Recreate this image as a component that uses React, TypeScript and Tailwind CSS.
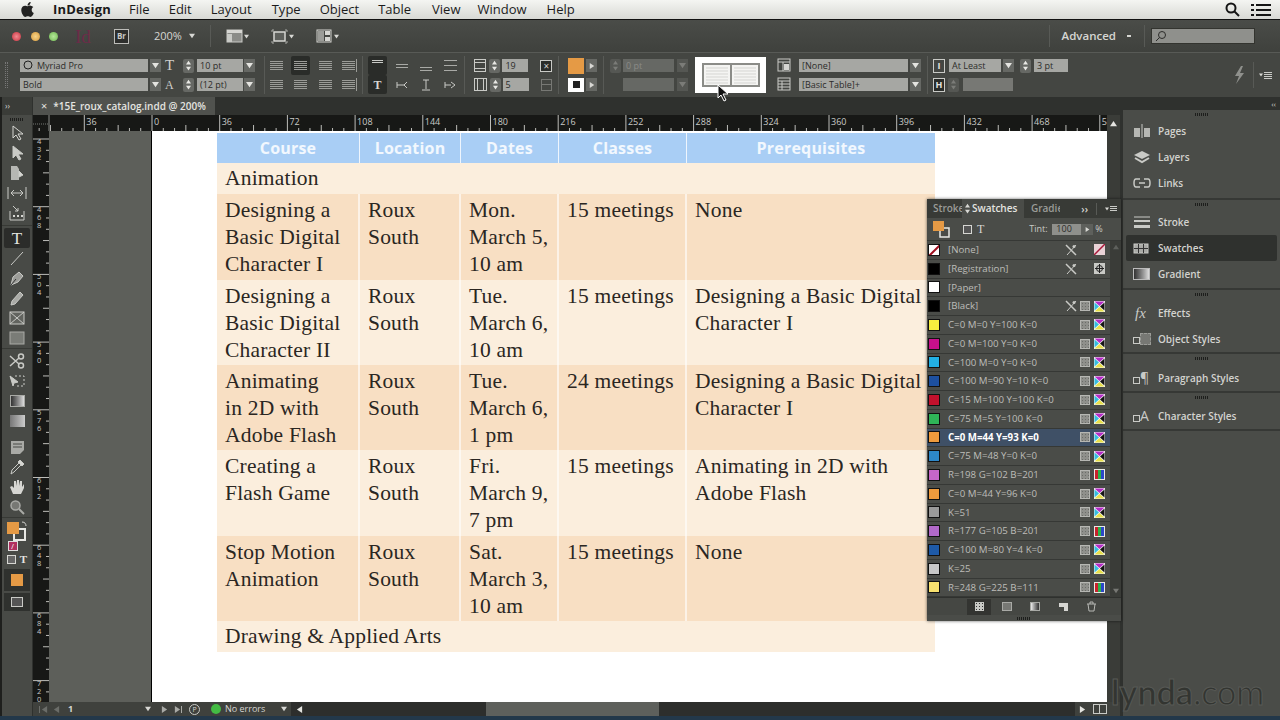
import { FaApple } from "react-icons/fa";
import type { ReactNode } from "react";

// ── Small shared bits ──
const Arrow = ({ dir = "down", c = "#d8d8d4", s = 7 }: { dir?: "down" | "up" | "left" | "right"; c?: string; s?: number }) => {
  const pts = { down: "0,1 8,1 4,7", up: "0,7 8,7 4,1", left: "7,0 7,8 1,4", right: "1,0 1,8 7,4" }[dir];
  return (
    <svg width={s} height={s} viewBox="0 0 8 8" className="shrink-0">
      <polygon points={pts} fill={c} />
    </svg>
  );
};

const Ic = ({ w = 16, h = 16, children, vb }: { w?: number; h?: number; children: ReactNode; vb?: string }) => (
  <svg width={w} height={h} viewBox={vb ?? `0 0 ${w} ${h}`} fill="none" stroke="#c9cac6" strokeWidth="1" className="shrink-0">
    {children}
  </svg>
);

const Field = ({ w, children, dim }: { w: number; children?: ReactNode; dim?: boolean }) => (
  <div
    className={`flex h-[13px] shrink-0 items-center overflow-hidden px-[3px] text-[9px] whitespace-nowrap ${dim ? "bg-[#666864] text-[#8a8b87]" : "bg-[#a6a7a3] text-[#2c2c2a]"}`}
    style={{ width: w }}
  >
    {children}
  </div>
);

const DropBtn = ({ dim, ml = 2 }: { dim?: boolean; ml?: number }) => (
  <div className={`flex h-[13px] w-[11px] shrink-0 items-center justify-center ${dim ? "bg-[#555753]" : "bg-[#666864]"}`} style={{ marginLeft: ml }}>
    <Arrow c={dim ? "#7b7c78" : "#e4e4e0"} s={7} />
  </div>
);

const Stepper = ({ dim }: { dim?: boolean }) => (
  <div className={`flex h-[14px] w-[11px] shrink-0 flex-col items-center justify-center gap-[1px] rounded-[2px] ${dim ? "bg-[#555753]" : "bg-[#666864]"}`}>
    <Arrow dir="up" s={5} c={dim ? "#7b7c78" : "#e8e8e4"} />
    <Arrow s={5} c={dim ? "#7b7c78" : "#e8e8e4"} />
  </div>
);

const Row = ({ children, className = "" }: { children: ReactNode; className?: string }) => (
  <div className={`flex h-[19px] items-center ${className}`}>{children}</div>
);

const Sep = ({ ml = 0 }: { ml?: number }) => <div className="h-[38px] w-px shrink-0 bg-[#585a56]" style={{ marginLeft: ml }} />;

const Grip = ({ w = 16 }: { w?: number }) => (
  <div className="flex h-[3px] gap-px" style={{ width: w }}>
    {Array.from({ length: Math.floor(w / 2) }).map((_, i) => (
      <div key={i} className="h-[3px] w-px bg-[#1d1e1c]" />
    ))}
  </div>
);

// ── Mac menu bar ──
const menus = ["File", "Edit", "Layout", "Type", "Object", "Table", "View", "Window", "Help"];
const menuGaps = [18, 19, 19, 20, 19, 19, 21, 17, 20];

function MenuBar() {
  return (
    <div className="flex h-[20px] items-center border-b border-[#111] bg-gradient-to-b from-[#f4f5f2] to-[#d8d9d5] pl-[19px] font-['Open_Sans',sans-serif] text-[13px] text-[#1b1b1b]">
      <FaApple className="text-[17px] text-[#222]" />
      <span className="ml-[17px] font-bold tracking-[0.2px]">InDesign</span>
      {menus.map((m, i) => (
        <span key={m} style={{ marginLeft: menuGaps[i] }}>
          {m}
        </span>
      ))}
      <div className="ml-auto mr-[9px] flex items-center gap-[11px]">
        <svg width="15" height="15" viewBox="0 0 15 15" fill="none" stroke="#151515" strokeWidth="2">
          <circle cx="6" cy="6" r="4.5" />
          <path d="M9.5 9.5 14 14" />
        </svg>
        <svg width="20" height="14" viewBox="0 0 20 14" fill="#151515">
          <rect x="0" y="1" width="3" height="2" />
          <rect x="5" y="1" width="15" height="2" />
          <rect x="0" y="6" width="3" height="2" />
          <rect x="5" y="6" width="15" height="2" />
          <rect x="0" y="11" width="3" height="2" />
          <rect x="5" y="11" width="15" height="2" />
        </svg>
      </div>
    </div>
  );
}

// ── Application bar ──
function AppBar() {
  return (
    <div className="flex h-[32px] items-center bg-gradient-to-b from-[#4a4c48] to-[#3f413d] font-['Open_Sans',sans-serif]">
      <div className="ml-[12px] h-[9px] w-[9px] rounded-full bg-[radial-gradient(#f08a90,#c9303e)]" />
      <div className="ml-[10px] h-[9px] w-[9px] rounded-full bg-[radial-gradient(#f6d48a,#d89a3a)]" />
      <div className="ml-[9px] h-[9px] w-[9px] rounded-full bg-[radial-gradient(#b6e89a,#6eb850)]" />
      <span className="ml-[17px] w-[20px] font-['Liberation_Serif',serif] text-[19px] leading-none text-[#6c2c48]">Id</span>
      <div className="ml-[19px] flex h-[15px] w-[15px] items-center justify-center border border-[#bdbdb9] bg-[#2e2f2d] text-[8px] font-bold text-[#c9cac6]">Br</div>
      <span className="ml-[25px] w-[29px] whitespace-nowrap text-[11px] text-[#d6d6d2]">200%</span>
      <span className="ml-[6px]"><Arrow s={6} /></span>
      <div className="ml-[15px] h-[22px] w-px bg-[#585a56]" />
      <div className="ml-[15px] flex items-center gap-[1px]">
        <Ic w={17} h={14}>
          <rect x="1" y="1" width="15" height="12" fill="#8b8c88" stroke="#c9cac6" />
          <rect x="1" y="1" width="15" height="3" fill="#d6d6d2" stroke="none" />
          <rect x="1" y="5" width="5" height="8" fill="#c9cac6" stroke="none" />
        </Ic>
        <Arrow s={5} />
      </div>
      <div className="ml-[22px] flex items-center gap-[1px]">
        <Ic w={17} h={15}>
          <rect x="3" y="3" width="11" height="9" fill="#5e605c" stroke="#d6d6d2" strokeWidth="1.5" />
          <path d="M1 3V1H3M14 1H16V3M16 12V14H14M3 14H1V12" stroke="#a9aaa6" />
        </Ic>
        <Arrow s={5} />
      </div>
      <div className="ml-[22px] flex items-center gap-[1px]">
        <Ic w={17} h={14}>
          <rect x="1" y="1" width="14" height="12" stroke="#d6d6d2" />
          <rect x="2" y="2" width="6" height="10" fill="#9b9c98" stroke="none" />
          <rect x="9" y="2" width="5" height="4" fill="#d6d6d2" stroke="none" />
          <rect x="9" y="8" width="5" height="4" fill="#d6d6d2" stroke="none" />
        </Ic>
        <Arrow s={5} />
      </div>
      <div className="ml-auto h-[22px] w-px bg-[#585a56]" />
      <span className="ml-[12px] text-[11.5px] font-semibold text-[#d6d6d2]">Advanced</span>
      <div className="ml-[11px] h-[2px] w-[4px] bg-[#d6d6d2]" />
      <div className="ml-[13px] h-[22px] w-px bg-[#585a56]" />
      <div className="ml-[6px] mr-[25px] flex h-[16px] w-[104px] items-center border border-[#33342f] bg-[#8f908c] pl-[3px]">
        <svg width="12" height="12" viewBox="0 0 12 12" fill="none" stroke="#2c2c2a">
          <circle cx="7" cy="5" r="3.5" />
          <path d="M4.5 7.5 1 11" />
        </svg>
      </div>
    </div>
  );
}

// ── Control panel ──
const AlignIcon = ({ active, lastBar }: { active?: boolean; lastBar?: boolean }) => (
  <div className={`flex h-[19px] w-[19px] items-center justify-center gap-[1px] ${active ? "rounded-[2px] bg-[#2a2c29]" : ""}`}>
    <div className="flex w-[13px] flex-col gap-[1px]">
      {[0, 1, 2, 3, 4].map((i) => (
        <div key={i} className="h-px bg-[#9b9c98]" />
      ))}
    </div>
    {lastBar && <div className="h-[13px] w-px bg-[#9b9c98]" />}
  </div>
);

const Slot = ({ children, active }: { children: ReactNode; active?: boolean }) => (
  <div className={`flex h-[19px] w-[19px] items-center justify-center ${active ? "rounded-[2px] bg-[#2a2c29]" : ""}`}>{children}</div>
);

function ControlPanel() {
  return (
    <div className="flex h-[45px] items-center border-t border-[#585a56] bg-[#444642] font-['Open_Sans',sans-serif]">
      <div className="ml-[5px] h-[26px] w-[3px] border-x border-dotted border-[#777]" />
      {/* font family and style */}
      <div className="ml-[12px] flex w-[141px] flex-col">
        <Row>
          <Field w={128}>
            <svg width="11" height="11" viewBox="0 0 11 11" fill="none" stroke="#222" className="mr-[3px]">
              <circle cx="5" cy="5" r="4" />
            </svg>
            Myriad Pro
          </Field>
          <DropBtn />
        </Row>
        <Row>
          <Field w={128}>Bold</Field>
          <DropBtn />
        </Row>
      </div>
      <div className="ml-[4px] flex w-[90px] flex-col">
        <Row>
          <span className="w-[18px] font-['Liberation_Serif',serif] text-[15px] leading-none text-[#d0d0cc]">T</span>
          <Stepper />
          <div className="ml-[3px]" />
          <Field w={46}>10 pt</Field>
          <DropBtn ml={1} />
        </Row>
        <Row>
          <span className="w-[18px] font-['Liberation_Serif',serif] text-[12px] leading-none text-[#d0d0cc]">A</span>
          <Stepper />
          <div className="ml-[3px]" />
          <Field w={46}>(12 pt)</Field>
          <DropBtn ml={1} />
        </Row>
      </div>
      <Sep ml={9} />
      {/* paragraph alignment */}
      <div className="ml-[2px] flex w-[92px] flex-col">
        <Row className="justify-between">
          <AlignIcon />
          <AlignIcon active />
          <AlignIcon />
          <AlignIcon lastBar />
        </Row>
        <Row className="justify-between">
          <AlignIcon />
          <AlignIcon />
          <AlignIcon />
          <AlignIcon lastBar />
        </Row>
      </div>
      <Sep ml={3} />
      {/* vertical text alignment */}
      <div className="ml-[5px] flex w-[92px] flex-col">
        <Row className="justify-between">
          <Slot active><div className="mb-[9px] h-[3px] w-[11px] border-y border-[#c9cac6]" /></Slot>
          <Slot><div className="h-[4px] w-[12px] border-y border-[#a9aaa6]" /></Slot>
          <Slot><div className="mt-[6px] h-[4px] w-[12px] border-y border-[#a9aaa6]" /></Slot>
          <Slot>
            <div className="flex h-[11px] w-[13px] flex-col justify-between">
              <div className="h-px bg-[#a9aaa6]" />
              <div className="h-px bg-[#a9aaa6]" />
              <div className="h-px bg-[#a9aaa6]" />
            </div>
          </Slot>
        </Row>
        <Row className="justify-between">
          <Slot active><span className="font-['Liberation_Serif',serif] text-[12px] font-bold leading-none text-[#d6d6d2]">T</span></Slot>
          <Slot><Ic w={12} h={10}><path d="M1 2V8M1 5H8M11 2 8 5 11 8" /></Ic></Slot>
          <Slot><Ic w={10} h={12}><path d="M2 1H8M5 1V10M1 11H9" /></Ic></Slot>
          <Slot><Ic w={12} h={10}><path d="M1 2V8M1 5H7M7 2 11 5 7 8" /></Ic></Slot>
        </Row>
      </div>
      <Sep ml={4} />
      {/* rows and columns */}
      <div className="ml-[9px] flex w-[78px] flex-col">
        <Row>
          <div className="flex h-[13px] w-[13px] flex-col justify-between border border-[#c9cac6] py-[2px]">
            <div className="h-px bg-[#c9cac6]" />
            <div className="h-px bg-[#c9cac6]" />
          </div>
          <div className="ml-[3px]"><Stepper /></div>
          <div className="ml-[2px]"><Field w={26}>19</Field></div>
          <div className="ml-[12px] flex h-[12px] w-[12px] items-center justify-center border border-[#c9cac6] bg-[#2a2c29] text-[10px] leading-none text-[#d6d6d2]">×</div>
        </Row>
        <Row>
          <div className="flex h-[13px] w-[13px] justify-between border border-[#c9cac6] px-[2px]">
            <div className="w-px bg-[#c9cac6]" />
            <div className="w-px bg-[#c9cac6]" />
          </div>
          <div className="ml-[3px]"><Stepper /></div>
          <div className="ml-[2px]"><Field w={26}>5</Field></div>
          <div className="ml-[12px] flex h-[12px] w-[12px] items-center border border-[#777874]"><div className="h-px w-full bg-[#777874]" /></div>
        </Row>
      </div>
      <Sep ml={6} />
      {/* cell fill */}
      <div className="ml-[9px] flex w-[29px] flex-col">
        <Row>
          <div className="h-[16px] w-[16px] bg-[#e59a45]" />
          <div className="ml-[2px] flex h-[13px] w-[11px] items-center justify-center bg-[#666864]"><Arrow dir="right" s={6} /></div>
        </Row>
        <Row>
          <div className="flex h-[14px] w-[16px] items-center justify-center bg-white"><div className="h-[7px] w-[7px] bg-[#222]" /></div>
          <div className="ml-[2px] flex h-[13px] w-[11px] items-center justify-center bg-[#666864]"><Arrow dir="right" s={6} /></div>
        </Row>
      </div>
      <Sep ml={6} />
      <div className="ml-[6px] flex w-[78px] flex-col">
        <Row>
          <Stepper dim />
          <div className="ml-[2px]"><Field w={51} dim>0 pt</Field></div>
          <DropBtn dim ml={3} />
        </Row>
        <Row>
          <div className="w-[13px]" />
          <Field w={51} dim />
          <DropBtn dim ml={3} />
        </Row>
      </div>
      {/* cell preview */}
      <div className="ml-[7px] flex h-[36px] w-[71px] items-center justify-center bg-white">
        <svg width="58" height="24" viewBox="0 0 58 24" fill="none">
          <rect x="1" y="1" width="56" height="22" fill="#f4f4f2" stroke="#8b8c88" strokeWidth="2" />
          <path d="M29 1V23" stroke="#8b8c88" strokeWidth="2" />
          <path d="M4 5H26M4 8H26M4 11H26M4 14H26M4 17H26M4 20H26M32 5H54M32 8H54M32 11H54M32 14H54M32 17H54M32 20H54" stroke="#d5d5d2" />
        </svg>
      </div>
      <div className="ml-[11px] flex w-[144px] flex-col">
        <Row>
          <Ic w={17} h={15}>
            <rect x="1" y="1" width="12" height="12" stroke="#c9cac6" />
            <path d="M1 4H13M6 4V13" />
            <rect x="7" y="6" width="5" height="6" fill="#d6d6d2" stroke="none" />
          </Ic>
          <div className="ml-[5px]"><Field w={109}>[None]</Field></div>
          <DropBtn />
        </Row>
        <Row>
          <Ic w={17} h={15}>
            <rect x="1" y="1" width="12" height="12" stroke="#c9cac6" />
            <path d="M1 4H13M1 7H13M1 10H13M5 4V13" />
          </Ic>
          <div className="ml-[5px]"><Field w={109}>[Basic Table]+</Field></div>
          <DropBtn />
        </Row>
      </div>
      <Sep ml={6} />
      <div className="ml-[5px] flex w-[140px] flex-col">
        <Row>
          <div className="flex h-[14px] w-[12px] items-center justify-center border border-[#c9cac6] text-[9px] font-bold text-[#e4e4e0]">I</div>
          <div className="ml-[4px]"><Field w={52}>At Least</Field></div>
          <DropBtn />
          <div className="ml-[6px]"><Stepper /></div>
          <div className="ml-[3px]"><Field w={34}>3 pt</Field></div>
        </Row>
        <Row>
          <div className="flex h-[14px] w-[12px] items-center justify-center border border-[#c9cac6] bg-[#2a2c29] text-[9px] font-bold text-[#e4e4e0]">H</div>
          <div className="ml-[3px]"><Stepper dim /></div>
          <div className="ml-[4px] h-[13px] w-[50px] bg-[#777874]" />
        </Row>
      </div>
      <svg width="12" height="18" viewBox="0 0 12 18" fill="#8f908c" className="ml-[160px]">
        <path d="M8 0 2 10H6L3 18 11 7H7L10 0Z" />
      </svg>
      <div className="ml-[8px] h-[26px] w-px bg-[#585a56]" />
      <div className="ml-[5px] flex items-center gap-[1px]">
        <Arrow s={4} />
        <div className="flex w-[8px] flex-col gap-[1px]">
          <div className="h-px bg-[#c9cac6]" />
          <div className="h-px bg-[#c9cac6]" />
          <div className="h-px bg-[#c9cac6]" />
          <div className="h-px bg-[#c9cac6]" />
        </div>
      </div>
    </div>
  );
}

// ── Tools ──
const ToolSlot = ({ children, active }: { children: ReactNode; active?: boolean }) => (
  <div className={`mx-auto flex h-[20px] w-[26px] items-center justify-center ${active ? "rounded-[2px] bg-[#2b2c2a]" : ""}`}>{children}</div>
);

const tool = {
  select: <Ic w={14} h={16}><path d="M3 1V13L6 10L9 15L11 14L8 9H13Z" stroke="#d6d6d2" /></Ic>,
  direct: <Ic w={14} h={16}><path d="M3 1V13L6 10L9 15L11 14L8 9H13Z" fill="#c9cac6" /></Ic>,
  page: <Ic w={16} h={16}><path d="M2 1H8L10 4V15H2Z" fill="#b6b7b3" stroke="none" /><path d="M10 6V12L12 11L14 10Z" fill="#d6d6d2" /></Ic>,
  gap: <Ic w={20} h={14}><path d="M1 1V13M19 1V13M4 7H16M4 7L7 4M4 7L7 10M16 7L13 4M16 7L13 10" /></Ic>,
  collect: <Ic w={18} h={16}><path d="M2 6V15H16V6" /><path d="M5 11H7M9 11H11M13 11H15" stroke="#d6d6d2" strokeWidth="2" /><path d="M5 1L10 6M10 3V6H7" /></Ic>,
  type: <span className="font-['Liberation_Serif',serif] text-[17px] leading-none text-[#e4e4e0]">T</span>,
  line: <Ic w={16} h={16}><path d="M2 15 14 2" /></Ic>,
  pen: <Ic w={16} h={16}><path d="M2 15 4 7 10 2 14 6 9 12Z" fill="#9b9c98" /><path d="M2 15 7 9" stroke="#333" /></Ic>,
  pencil: <Ic w={16} h={16}><path d="M2 15 3 11 11 2 14 5 6 14Z" fill="#a9aaa6" /></Ic>,
  frame: <Ic w={16} h={14}><rect x="1" y="1" width="14" height="12" fill="#62645f" /><path d="M1 1 15 13M15 1 1 13" /></Ic>,
  rect: <Ic w={16} h={14}><rect x="1" y="1" width="14" height="12" fill="#7a7c77" stroke="#a9aaa6" /></Ic>,
  scissors: <Ic w={16} h={16}><circle cx="12" cy="3.5" r="2.5" strokeWidth="1.5" /><circle cx="12" cy="12.5" r="2.5" strokeWidth="1.5" /><path d="M1 3 10 11M1 13 10 5" strokeWidth="1.5" /></Ic>,
  free: <Ic w={17} h={16}><path d="M6 3H15V13H8" strokeDasharray="2 2" /><path d="M1 3 9 9 5 10 4 13Z" fill="#c9cac6" /></Ic>,
  grad: <div className="h-[12px] w-[15px] border border-[#a9aaa6] bg-gradient-to-r from-[#333] to-[#ddd]" />,
  feather: <div className="h-[12px] w-[15px] bg-gradient-to-r from-[#777] to-[#ccc]" />,
  note: <Ic w={15} h={15}><path d="M1 1H14V10L10 14H1Z" fill="#a9aaa6" stroke="none" /><path d="M3 4H12M3 7H12" stroke="#484a46" /></Ic>,
  dropper: <Ic w={16} h={16}><path d="M2 15 3 11 10 4 12 6 5 13Z" /><path d="M9 3 11 1 15 5 13 7Z" fill="#d6d6d2" /></Ic>,
  hand: <Ic w={16} h={16}><path d="M4 15 1 8 3 7 5 9V2L7 2 8 7V1H10V7L11 2H13V8L15 5V9L12 15Z" fill="#d6d6d2" stroke="none" /></Ic>,
  zoom: <Ic w={16} h={16}><circle cx="6.5" cy="6.5" r="4.5" fill="#777874" stroke="#a9aaa6" strokeWidth="1.5" /><path d="M10 10 15 15" stroke="#a9aaa6" strokeWidth="2" /></Ic>,
};

function Tools() {
  return (
    <div className="flex w-[32px] shrink-0 flex-col border-l-2 border-[#1e1f1d] bg-[#484a46]">
      <div className="flex h-[18px] items-center bg-[#3a3c38] pl-[3px]">
        <span className="text-[8px] leading-none text-[#cfcfcb]">››</span>
      </div>
      <div className="flex h-[8px] items-center justify-center"><Grip w={14} /></div>
      <div className="flex flex-col border-b border-[#373935] pb-[2px]">
        <ToolSlot>{tool.select}</ToolSlot>
        <ToolSlot>{tool.direct}</ToolSlot>
        <ToolSlot>{tool.page}</ToolSlot>
        <ToolSlot>{tool.gap}</ToolSlot>
        <ToolSlot>{tool.collect}</ToolSlot>
      </div>
      <div className="flex flex-col border-b border-[#373935] pt-[2px]">
        <ToolSlot active>{tool.type}</ToolSlot>
        <ToolSlot>{tool.line}</ToolSlot>
        <ToolSlot>{tool.pen}</ToolSlot>
        <ToolSlot>{tool.pencil}</ToolSlot>
        <ToolSlot>{tool.frame}</ToolSlot>
        <ToolSlot>{tool.rect}</ToolSlot>
      </div>
      <div className="flex flex-col border-b border-[#373935] pt-[2px]">
        <ToolSlot>{tool.scissors}</ToolSlot>
        <ToolSlot>{tool.free}</ToolSlot>
        <ToolSlot>{tool.grad}</ToolSlot>
        <ToolSlot>{tool.feather}</ToolSlot>
        <div className="h-[6px]" />
        <ToolSlot>{tool.note}</ToolSlot>
        <ToolSlot>{tool.dropper}</ToolSlot>
        <ToolSlot>{tool.hand}</ToolSlot>
        <ToolSlot>{tool.zoom}</ToolSlot>
      </div>
      {/* fill and stroke */}
      <div className="flex flex-col items-center pt-[3px]">
        <svg width="22" height="20" viewBox="0 0 22 20" fill="none">
          <rect x="8" y="8" width="11" height="11" fill="none" stroke="#e8e8e4" strokeWidth="2" />
          <rect x="1" y="1" width="12" height="12" fill="#e59a45" />
          <path d="M16 1C19 1 20 3 20 5" stroke="#d6d6d2" />
        </svg>
        <div className="ml-[-9px] flex h-[10px] w-[10px] items-center justify-center border border-[#ddd] bg-[#b03060] text-[7px] leading-none text-white">/</div>
        <div className="mt-[3px] flex items-center gap-[4px]">
          <div className="h-[9px] w-[9px] border border-[#d6d6d2] bg-[#666]" />
          <span className="font-['Liberation_Serif',serif] text-[11px] font-bold leading-none text-[#e4e4e0]">T</span>
        </div>
        <div className="mt-[4px] flex h-[22px] w-[26px] items-center justify-center bg-[#2f312e]"><div className="h-[12px] w-[12px] bg-[#e59a45]" /></div>
        <div className="mt-[2px] flex h-[18px] w-[26px] items-center justify-center bg-[#2f312e]">
          <div className="h-[10px] w-[12px] border border-[#c9cac6] bg-[#555]" />
        </div>
      </div>
    </div>
  );
}

// ── Rulers ──
const UNIT = 67.7;
const hLabels = ["36", "0", "36", "72", "108", "144", "180", "216", "252", "288", "324", "360", "396", "432", "468", "5("];

function HRuler() {
  const origin = 152 - 33;
  const ticks: ReactNode[] = [];
  for (let i = -24; i < 96; i++) {
    const x = origin + (i * UNIT) / 6;
    const h = i % 6 === 0 ? 16 : i % 3 === 0 ? 6 : 3;
    ticks.push(<line key={i} x1={x} x2={x} y1={16 - h} y2={16} stroke="#bdbdb9" strokeWidth="1" />);
  }
  return (
    <div className="flex h-[16px] bg-[#171816]">
      <svg width="1074" height="16" className="shrink-0">
        <line x1="16" x2="16" y1="0" y2="16" stroke="#8b8c88" />
        <line x1="0" x2="16" y1="9" y2="9" stroke="#777874" strokeDasharray="1 1" />
        {ticks}
        {hLabels.map((l, i) => (
          <text key={i} x={origin + (i - 1) * UNIT + 2} y="10" fill="#c9cac6" fontSize="9" fontFamily="Open Sans, sans-serif">
            {l}
          </text>
        ))}
      </svg>
      <div className="flex w-[13px] items-center justify-center bg-[#3a3c38]"><Arrow dir="up" s={7} c="#e4e4e0" /></div>
    </div>
  );
}

function VRuler() {
  const labels = ["432", "468", "504", "540", "576", "612", "648", "684", "720"];
  const ticks: ReactNode[] = [];
  for (let i = 0; i < 60; i++) {
    const y = 8 + (i * UNIT) / 6;
    const w = i % 6 === 0 ? 16 : i % 3 === 0 ? 6 : 3;
    ticks.push(<line key={i} x1={16 - w} x2={16} y1={y} y2={y} stroke="#bdbdb9" />);
  }
  return (
    <svg width="16" height="571" className="shrink-0 bg-[#171816]">
      {ticks}
      {labels.map((l, i) => (
        <text key={l} y={7 + i * UNIT} fill="#c9cac6" fontSize="7.5" fontFamily="Open Sans, sans-serif">
          {l.split("").map((d, j) => (
            <tspan key={j} x="4" dy={j === 0 ? 6 : 8}>
              {d}
            </tspan>
          ))}
        </text>
      ))}
    </svg>
  );
}

// ── Table on the page ──
type Course = { lines: string[]; loc: string[]; date: string[]; cls: string; pre: string[]; h: number; bg: string };
const courses: Course[] = [
  { lines: ["Designing a", "Basic Digital", "Character I"], loc: ["Roux", "South"], date: ["Mon.", "March 5,", "10 am"], cls: "15 meetings", pre: ["None"], h: 86, bg: "bg-[#f8dfc3]" },
  { lines: ["Designing a", "Basic Digital", "Character II"], loc: ["Roux", "South"], date: ["Tue.", "March 6,", "10 am"], cls: "15 meetings", pre: ["Designing a Basic Digital", "Character I"], h: 85, bg: "bg-[#fbeedd]" },
  { lines: ["Animating", "in 2D with", "Adobe Flash"], loc: ["Roux", "South"], date: ["Tue.", "March 6,", "1 pm"], cls: "24 meetings", pre: ["Designing a Basic Digital", "Character I"], h: 85, bg: "bg-[#f8dfc3]" },
  { lines: ["Creating a", "Flash Game"], loc: ["Roux", "South"], date: ["Fri.", "March 9,", "7 pm"], cls: "15 meetings", pre: ["Animating in 2D with", "Adobe Flash"], h: 86, bg: "bg-[#fbeedd]" },
  { lines: ["Stop Motion", "Animation"], loc: ["Roux", "South"], date: ["Sat.", "March 3,", "10 am"], cls: "15 meetings", pre: ["None"], h: 85, bg: "bg-[#f8dfc3]" },
];
const colWidths = [143, 101, 98, 128, 248];
const heads = ["Course", "Location", "Dates", "Classes", "Prerequisites"];

const Cell = ({ w, lines, last }: { w: number; lines: string[]; last?: boolean }) => (
  <div className={`pl-[8px] pt-[3px] ${last ? "" : "border-r-2 border-white/60"}`} style={{ width: w }}>
    {lines.map((l) => (
      <div key={l} className="whitespace-nowrap">{l}</div>
    ))}
  </div>
);

function CourseTable() {
  return (
    <div className="ml-[65px] mt-[2px] w-[718px] font-['Liberation_Serif',serif] text-[21.5px] leading-[27px] tracking-[0.2px] text-[#2a2622]">
      <div className="flex h-[30px] bg-[#a9cef5]">
        {heads.map((h, i) => (
          <div
            key={h}
            className={`flex items-center justify-center font-['Open_Sans',sans-serif] text-[16px] font-bold text-white/85 ${i < 4 ? "border-r border-white/80" : ""}`}
            style={{ width: colWidths[i] }}
          >
            {h}
          </div>
        ))}
      </div>
      <div className="h-[31px] bg-[#fbeedd] pl-[8px] pt-[2px]">Animation</div>
      {courses.map((c) => (
        <div key={c.lines.join()} className={`flex ${c.bg}`} style={{ height: c.h }}>
          <Cell w={colWidths[0]} lines={c.lines} />
          <Cell w={colWidths[1]} lines={c.loc} />
          <Cell w={colWidths[2]} lines={c.date} />
          <Cell w={colWidths[3]} lines={[c.cls]} />
          <Cell w={colWidths[4]} lines={c.pre} last />
        </div>
      ))}
      <div className="h-[31px] bg-[#fbeedd] pl-[8px] pt-[2px]">Drawing &amp; Applied Arts</div>
    </div>
  );
}

// ── Status bar ──
function StatusBar() {
  return (
    <div className="flex h-[14px] items-center bg-[#3f413d] font-['Open_Sans',sans-serif] text-[9px] text-[#d6d6d2]">
      <div className="ml-[6px] flex items-center gap-[1px]">
        <div className="h-[7px] w-px bg-[#6b6d69]" />
        <Arrow dir="left" c="#6b6d69" />
        <div className="ml-[4px]"><Arrow dir="left" c="#6b6d69" /></div>
      </div>
      <span className="ml-[8px] w-[77px] font-bold">1</span>
      <Arrow s={6} />
      <div className="ml-[10px]"><Arrow dir="right" c="#a9aaa6" /></div>
      <div className="ml-[6px] flex items-center"><Arrow dir="right" c="#a9aaa6" /><div className="h-[7px] w-px bg-[#a9aaa6]" /></div>
      <div className="ml-[7px] flex h-[11px] w-[11px] items-center justify-center rounded-full border border-[#c9cac6] text-[7px] leading-none">P</div>
      <div className="ml-[11px] h-[10px] w-[10px] rounded-full bg-[#44bb44]" />
      <span className="ml-[4px] w-[56px] whitespace-nowrap">No errors</span>
      <Arrow s={6} />
      <div className="ml-[4px] flex h-full flex-1 items-center bg-[#2d2e2c] pl-[5px]">
        <Arrow dir="left" c="#e4e4e0" />
        <div className="ml-[183px] h-full w-[173px] bg-[#5e605c]" />
      </div>
      <div className="flex h-full w-[45px] items-center bg-[#3f413d] pl-[4px]">
        <Arrow dir="right" c="#e4e4e0" />
        <div className="ml-[7px] flex h-[10px] w-[14px] border border-[#c9cac6]"><div className="w-1/2 border-r border-[#c9cac6]" /></div>
      </div>
    </div>
  );
}

// ── Right dock ──
const DockItem = ({ label, icon, active }: { label: string; icon: ReactNode; active?: boolean }) => (
  <div className={`mx-[3px] flex h-[26px] items-center pl-[7px] ${active ? "rounded-[2px] bg-[#2f312e]" : ""}`}>
    <div className="flex w-[25px] shrink-0 items-center">{icon}</div>
    <span className="whitespace-nowrap text-[10px] font-semibold text-[#d3d3cf]">{label}</span>
  </div>
);

const DockGroup = ({ children, top, pb = 0 }: { children: ReactNode; top: number; pb?: number }) => (
  <div className="border-b-2 border-[#363835] bg-[#4a4c48]" style={{ paddingBottom: pb }}>
    <div className="flex items-start justify-center pt-[3px]" style={{ height: top }}><Grip w={14} /></div>
    {children}
  </div>
);

const StyleIcon = ({ children }: { children: ReactNode }) => (
  <div className="flex items-end">
    <div className="mb-[1px] h-[7px] w-[7px] border border-[#c9cac6]" />
    {children}
  </div>
);

function Dock() {
  return (
    <div className="flex w-[157px] shrink-0 flex-col font-['Open_Sans',sans-serif]">
      <div className="flex h-[13px] items-center justify-end bg-[#2f312e] pr-[4px] text-[8px] leading-none text-[#cfcfcb]">‹‹</div>
      <DockGroup top={8} pb={2}>
        <DockItem label="Pages" icon={<Ic w={18} h={14}><path d="M1 4H7V13H1ZM11 4H17V13H11Z" fill="#b6b7b3" stroke="none" /><path d="M9 0V14" /></Ic>} />
        <DockItem label="Layers" icon={<Ic w={18} h={15}><path d="M9 1 17 5 9 9 1 5Z" fill="#c9cac6" stroke="none" /><path d="M2 8 9 12 16 8" strokeWidth="2" /></Ic>} />
        <DockItem label="Links" icon={<Ic w={18} h={12}><path d="M7 2H3Q1 2 1 6T3 10H7M11 2H15Q17 2 17 6T15 10H11M6 6H12" strokeWidth="1.5" /></Ic>} />
      </DockGroup>
      <DockGroup top={9} pb={1}>
        <DockItem label="Stroke" icon={<Ic w={18} h={13}><path d="M1 1H17" /><path d="M1 5H17" strokeWidth="2" /><path d="M1 10.5H17" strokeWidth="3" /></Ic>} />
        <DockItem active label="Swatches" icon={<Ic w={16} h={11}><rect x="1" y="1" width="14" height="9" fill="#a9aaa6" /><path d="M1 5.5H15M5.5 1V10M10.5 1V10" stroke="#333" /></Ic>} />
        <DockItem label="Gradient" icon={<div className="h-[12px] w-[17px] border border-[#bbb] bg-gradient-to-r from-[#333] to-[#ddd]" />} />
      </DockGroup>
      <DockGroup top={10}>
        <DockItem label="Effects" icon={<span className="pl-[2px] font-['Liberation_Serif',serif] text-[15px] italic leading-none text-[#c9cac6]">fx</span>} />
        <DockItem label="Object Styles" icon={<StyleIcon><div className="h-[12px] w-[11px] border border-dashed border-[#9b9c98] bg-[#777874]" /></StyleIcon>} />
      </DockGroup>
      <DockGroup top={11}>
        <DockItem label="Paragraph Styles" icon={<StyleIcon><span className="text-[14px] leading-none text-[#c9cac6]">¶</span></StyleIcon>} />
      </DockGroup>
      <DockGroup top={10}>
        <DockItem label="Character Styles" icon={<StyleIcon><span className="text-[14px] leading-none text-[#c9cac6]">A</span></StyleIcon>} />
      </DockGroup>
      <div className="flex-1 bg-[#4a4c48]" />
    </div>
  );
}

// ── Swatches panel ──
type Swatch = { name: string; color: string; mode: "cmyk" | "rgb" | "none" | "reg" | "x"; proc?: boolean; locked?: boolean; sel?: boolean };
const swatches: Swatch[] = [
  { name: "[None]", color: "none", mode: "none", locked: true },
  { name: "[Registration]", color: "#000", mode: "reg", locked: true },
  { name: "[Paper]", color: "#fff", mode: "x" },
  { name: "[Black]", color: "#000", mode: "cmyk", locked: true, proc: true },
  { name: "C=0 M=0 Y=100 K=0", color: "#f7ee3f", mode: "cmyk", proc: true },
  { name: "C=0 M=100 Y=0 K=0", color: "#c8108c", mode: "cmyk", proc: true },
  { name: "C=100 M=0 Y=0 K=0", color: "#22b0e5", mode: "cmyk", proc: true },
  { name: "C=100 M=90 Y=10 K=0", color: "#1d50a0", mode: "cmyk", proc: true },
  { name: "C=15 M=100 Y=100 K=0", color: "#c3112d", mode: "cmyk", proc: true },
  { name: "C=75 M=5 Y=100 K=0", color: "#2fb457", mode: "cmyk", proc: true },
  { name: "C=0 M=44 Y=93 K=0", color: "#ef9b3d", mode: "cmyk", proc: true, sel: true },
  { name: "C=75 M=48 Y=0 K=0", color: "#2d87c8", mode: "cmyk", proc: true },
  { name: "R=198 G=102 B=201", color: "#c666c9", mode: "rgb", proc: true },
  { name: "C=0 M=44 Y=96 K=0", color: "#ef9b3d", mode: "cmyk", proc: true },
  { name: "K=51", color: "#9a9a9a", mode: "cmyk", proc: true },
  { name: "R=177 G=105 B=201", color: "#b169c9", mode: "rgb", proc: true },
  { name: "C=100 M=80 Y=4 K=0", color: "#1e5aa8", mode: "cmyk", proc: true },
  { name: "K=25", color: "#c8c8c8", mode: "cmyk", proc: true },
  { name: "R=248 G=225 B=111", color: "#f8e16f", mode: "rgb", proc: true },
];

const ModeIcon = ({ mode }: { mode: Swatch["mode"] }) => {
  if (mode === "x") return <div className="w-[11px]" />;
  return (
    <svg width="11" height="11" viewBox="0 0 11 11" className="shrink-0">
      {mode === "cmyk" && (
        <>
          <rect width="11" height="11" fill="#f4f4f0" />
          <polygon points="0.5,0.5 10.5,0.5 5.5,5" fill="#b52cc8" />
          <polygon points="0.5,10.5 10.5,10.5 5.5,6" fill="#e8e04a" />
          <polygon points="0.5,1.5 5,5.5 0.5,9.5" fill="#35bce0" />
          <polygon points="10.5,1.5 6,5.5 10.5,9.5" fill="#151515" />
        </>
      )}
      {mode === "rgb" && (
        <>
          <rect width="11" height="11" fill="#e8e8e4" />
          <rect x="1" y="1" width="3" height="9" fill="#c8222c" />
          <rect x="4" y="1" width="3" height="9" fill="#2cb44a" />
          <rect x="7" y="1" width="3" height="9" fill="#2b48c8" />
        </>
      )}
      {mode === "none" && (
        <>
          <rect width="11" height="11" fill="#e9d2d6" />
          <path d="M0 11 11 0" stroke="#a8183a" strokeWidth="1.5" />
        </>
      )}
      {mode === "reg" && (
        <>
          <rect width="11" height="11" fill="#c9cac6" />
          <circle cx="5.5" cy="5.5" r="3" fill="none" stroke="#222" />
          <path d="M5.5 1V10M1 5.5H10" stroke="#222" />
        </>
      )}
    </svg>
  );
};

function SwatchRow({ s }: { s: Swatch }) {
  return (
    <div className={`flex h-[18.75px] items-center border-b border-[#363835] ${s.sel ? "bg-[#3f5066] font-bold text-white" : "text-[#bdbdb9]"}`}>
      <div className="relative ml-[1px] h-[12px] w-[12px] shrink-0 overflow-hidden border border-[#111]" style={{ background: s.color === "none" ? "#fff" : s.color }}>
        {s.color === "none" && <div className="absolute left-[-3px] top-[4px] h-[2px] w-[18px] rotate-[-45deg] bg-[#a01020]" />}
      </div>
      <span className="ml-[8px] whitespace-nowrap pt-px text-[9.7px]">{s.name}</span>
      <div className="ml-auto flex items-center pr-[5px]">
        {s.locked && (
          <svg width="12" height="12" viewBox="0 0 12 12" fill="none" stroke="#c9cac6" className="mr-[3px]">
            <path d="M1 1 11 11" strokeWidth="1.5" />
            <path d="M11 1 2 11" strokeWidth="1" />
            <circle cx="9" cy="2.5" r="1.5" fill="#c9cac6" stroke="none" />
          </svg>
        )}
        {s.proc ? (
          <div className="mr-[4px] h-[10px] w-[10px] border border-[#b6b7b3] bg-[#8f908c] bg-[radial-gradient(#6b6d69_1px,transparent_1px)] bg-[length:3px_3px]" />
        ) : (
          <div className="mr-[4px] w-[10px]" />
        )}
        <ModeIcon mode={s.mode} />
      </div>
    </div>
  );
}

function SwatchesPanel() {
  return (
    <div className="absolute left-[927px] top-[199px] flex h-[422px] w-[194px] flex-col bg-[#4a4c48] font-['Open_Sans',sans-serif] shadow-[0_0_3px_rgba(0,0,0,0.6)]">
      <div className="flex h-[19px] shrink-0 items-end bg-[#383a36] text-[10px] font-semibold">
        <div className="flex h-[19px] w-[35px] items-center overflow-hidden whitespace-nowrap pl-[6px] text-[#9b9c98]">Stroke</div>
        <div className="flex h-[19px] w-[62px] items-center bg-[#4a4c48] pl-[3px] text-[#e4e4e0]">
          <div className="mr-[2px] flex flex-col gap-[1px]">
            <Arrow dir="up" s={5} />
            <Arrow s={5} />
          </div>
          Swatches
        </div>
        <div className="flex h-[19px] w-[36px] items-center overflow-hidden whitespace-nowrap pl-[7px] text-[#9b9c98]">Gradient</div>
        <div className="ml-auto flex h-[19px] items-center gap-[8px] pr-[4px] text-[#d6d6d2]">
          <span className="text-[10px] leading-none">››</span>
          <div className="h-[12px] w-px bg-[#585a56]" />
          <div className="flex items-center gap-px">
            <Arrow s={4} />
            <div className="flex w-[7px] flex-col gap-px">
              <div className="h-px bg-[#c9cac6]" />
              <div className="h-px bg-[#c9cac6]" />
              <div className="h-px bg-[#c9cac6]" />
            </div>
          </div>
        </div>
      </div>
      <div className="flex h-[23px] shrink-0 items-center border-b border-[#363835] pl-[5px]">
        <svg width="20" height="18" viewBox="0 0 20 18" fill="none">
          <rect x="8" y="8" width="9" height="9" stroke="#e8e8e4" strokeWidth="1.5" />
          <rect x="1" y="1" width="11" height="10" fill="#e59a45" />
        </svg>
        <div className="ml-[11px] h-[9px] w-[9px] border border-[#d6d6d2] bg-[#555]" />
        <span className="ml-[5px] font-['Liberation_Serif',serif] text-[12px] leading-none text-[#d6d6d2]">T</span>
        <span className="ml-[45px] w-[23px] text-[9px] text-[#c9cac6]">Tint:</span>
        <div className="flex h-[11px] w-[29px] items-center bg-[#8f908c] pl-[4px] text-[9px] text-[#2c2c2a]">100</div>
        <div className="flex h-[11px] w-[12px] items-center justify-center bg-[#5e605c]"><Arrow dir="right" s={5} /></div>
        <span className="ml-[2px] text-[9px] text-[#c9cac6]">%</span>
      </div>
      <div className="flex min-h-0 flex-1">
        <div className="flex-1">
          {swatches.map((s) => (
            <SwatchRow key={s.name} s={s} />
          ))}
        </div>
        <div className="flex w-[11px] flex-col items-center justify-between bg-[#3a3c38] py-[3px]">
          <Arrow dir="up" s={6} c="#5e605c" />
          <Arrow s={6} c="#777874" />
        </div>
      </div>
      <div className="flex h-[18px] shrink-0 items-center border-t border-[#2f312e] bg-[#454743] pl-[38px]">
        <div className="flex h-[17px] w-[28px] items-center justify-center">
          <div className="flex h-[16px] w-[24px] items-center justify-center bg-[#333431]">
            <div className="h-[9px] w-[9px] bg-[#c9cac6] bg-[radial-gradient(#333_1px,transparent_1px)] bg-[length:3px_3px]" />
          </div>
        </div>
        <div className="flex w-[28px] justify-center"><div className="h-[9px] w-[10px] border border-[#a9aaa6] bg-[#777874]" /></div>
        <div className="flex w-[28px] justify-center"><div className="h-[9px] w-[10px] border border-[#a9aaa6] bg-gradient-to-r from-[#eee] to-[#333]" /></div>
        <div className="flex w-[28px] justify-center"><svg width="11" height="10" viewBox="0 0 11 10"><path d="M1 1H10V9H6V5H1Z" fill="#d6d6d2" /></svg></div>
        <div className="flex w-[28px] justify-center"><svg width="11" height="11" viewBox="0 0 11 11" fill="none" stroke="#b6b7b3"><path d="M1 3H10M4 3V1H7V3M2 3 3 10H8L9 3" /></svg></div>
      </div>
      <div className="flex h-[6px] shrink-0 items-center justify-center"><Grip w={14} /></div>
    </div>
  );
}

export default function App() {
  return (
    <div className="relative flex h-[720px] w-[1280px] flex-col overflow-hidden bg-[#2f312e]">
      <MenuBar />
      <AppBar />
      <ControlPanel />
      <div className="flex h-[619px]">
        <Tools />
        <div className="ml-px flex w-[1087px] shrink-0 flex-col">
          <div className="flex h-[18px] bg-[#2f312e]">
            <div className="flex w-[182px] items-center bg-[#50524e] pl-[8px] font-['Open_Sans',sans-serif] text-[10px] font-semibold whitespace-nowrap text-[#e4e4e0]">
              <span className="mr-[6px] text-[11px] font-normal">×</span>*15E_roux_catalog.indd @ 200%
            </div>
          </div>
          <HRuler />
          <div className="flex h-[571px]">
            <VRuler />
            <div className="w-[102px] bg-[#5d5f5a]" />
            <div className="w-[956px] border-l border-black bg-white">
              <CourseTable />
            </div>
            <div className="w-[13px] bg-[#3a3c38]" />
          </div>
          <StatusBar />
        </div>
        <div className="w-[3px] shrink-0 bg-[#2f312e]" />
        <Dock />
      </div>
      <div className="h-[4px] bg-[#23384a]" />
      <SwatchesPanel />
      {/* pointer */}
      <svg width="14" height="18" viewBox="0 0 14 18" className="absolute left-[716px] top-[84px]">
        <path d="M2 1V14L5 11L8 17L10 16L7 10H12Z" fill="#111" stroke="#fff" />
      </svg>
      {/* watermark */}
      <div className="absolute left-[1111px] top-[672px] font-['Lato',sans-serif] text-[34px] leading-[40px] text-[#333531] [-webkit-text-stroke:1px_#575955]">
        <span className="font-bold">lynda</span>
        <span className="font-normal">.com</span>
      </div>
    </div>
  );
}
